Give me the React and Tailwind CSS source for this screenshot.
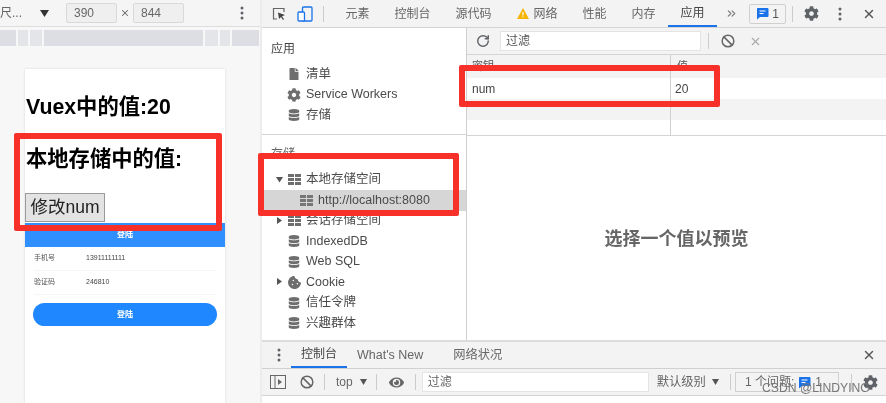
import React from 'react'
import { FaCog, FaDatabase, FaFile, FaCookieBite, FaEye } from 'react-icons/fa'
import { RotateCw, Ban, X, ChevronsRight } from 'lucide-react'

const MoreDots = ({ className }) => (
  <svg width="4" height="14" viewBox="0 0 4 14" className={className}>
    <circle cx="2" cy="2" r="1.5" fill="#5f6368" />
    <circle cx="2" cy="7" r="1.5" fill="#5f6368" />
    <circle cx="2" cy="12" r="1.5" fill="#5f6368" />
  </svg>
)

const GridIcon = ({ color = '#6e6e6e' }) => (
  <svg width="13" height="11" viewBox="0 0 13 11">
    <path d="M0 0h6v3H0zM7 0h6v3H7zM0 4h6v3H0zM7 4h6v3H7zM0 8h6v3H0zM7 8h6v3H7z" fill={color} />
  </svg>
)

const Caret = ({ dir }) => (
  <svg width="7" height="7" viewBox="0 0 7 7" className="shrink-0">
    {dir === 'down' ? <path d="M0 1h7L3.500 6.500z" fill="#555" /> : <path d="M1 0v7l5-3.500z" fill="#555" />}
  </svg>
)

const MessageIcon = () => (
  <svg width="13" height="13" viewBox="0 0 13 13">
    <path d="M1.500 1h10a1 1 0 0 1 1 1v7a1 1 0 0 1-1 1H4l-3 2.500V2a1 1 0 0 1 .5-1z" fill="#1a73e8" />
    <path d="M3.500 4h6M3.500 6.500h4" stroke="#fff" strokeWidth="1.200" />
  </svg>
)

const Tab = ({ children, active, pad = 'px-[12.5px] text-[12px]' }) => (
  <div className={`h-full flex items-center ${pad} ${active ? 'border-b-2 border-[#1a73e8] text-[#444]' : 'text-[#666]'}`}>
    {children}
  </div>
)

const TreeRow = ({ icon, caret, indent = 'pl-[25px]', children, selected }) => (
  <div className={`h-[20.5px] flex items-center relative text-[12.5px] text-[#4a4a4a] ${indent} ${selected ? 'bg-[#d6d6d6]' : ''}`}>
    {caret && <span className="absolute left-[14px] top-[6px] flex"><Caret dir={caret} /></span>}
    <span className="w-[14px] flex justify-center shrink-0">{icon}</span>
    <span className="ml-[5px] whitespace-nowrap">{children}</span>
  </div>
)

const DbIcon = () => <FaDatabase size={12} color="#6e6e6e" />

const RulerSegments = () => (
  <div className="mt-[3px] h-[16px] w-[259px] flex gap-[2px] bg-[#f7f7f7]">
    <div className="w-[16px] bg-[#dcdee3]" />
    <div className="w-[10px] bg-[#e3e5e9]" />
    <div className="w-[12px] bg-[#e3e5e9]" />
    <div className="flex-1 bg-[#dcdee3]" />
    <div className="w-[13px] bg-[#e3e5e9]" />
    <div className="w-[10px] bg-[#e3e5e9]" />
    <div className="w-[27px] bg-[#dcdee3]" />
  </div>
)

const DevicePanel = () => (
  <div className="w-[262px] shrink-0 flex flex-col bg-[#f7f7f7] border-r-2 border-[#ececec]">
    <div className="h-[27px] flex items-center bg-[#f5f5f5] border-b border-[#dedede] text-[12px] text-[#666]">
      <span className="w-[36px] whitespace-nowrap">尺...</span>
      <svg width="9" height="7" viewBox="0 0 9 7" className="ml-[4px]"><path d="M0 0h9L4.500 7z" fill="#333" /></svg>
      <div className="ml-[17px] w-[51px] h-[20px] pl-[7px] flex items-center bg-[#efefef] border border-[#d9d9d9] rounded-[2px]">390</div>
      <X size={10} color="#666" className="mx-[3px]" strokeWidth={2.500} />
      <div className="w-[51px] h-[20px] pl-[7px] flex items-center bg-[#efefef] border border-[#d9d9d9] rounded-[2px]">844</div>
      <MoreDots className="ml-[56px]" />
    </div>
    <RulerSegments />
    <div className="ml-[25px] mt-[23px] w-[200px] flex-1 bg-white shadow-[0_0_2px_#d5d5d5] overflow-hidden">
      <div className="h-[154px] pt-[24px] pl-[1px]">
        <h1 className="text-[21.3px] leading-[28px] font-bold text-black whitespace-nowrap">Vuex中的值:20</h1>
        <h1 className="mt-[24px] text-[21.3px] leading-[28px] font-bold text-black whitespace-nowrap">本地存储中的值:</h1>
        <button className="mt-[20px] -ml-[1px] w-[80px] h-[29px] text-[17.5px] leading-none text-[#222] bg-[#e3e3e3] border border-[#9a9a9a] whitespace-nowrap">修改num</button>
      </div>
      <div className="h-[24px] flex items-center justify-center bg-[#2f8fff] text-white text-[8px] font-bold">登陆</div>
      <div className="px-[9px] text-[7px] text-[#555]">
        <div className="h-[24px] flex items-center border-b border-[#f6f6f6]">
          <span className="w-[52px]">手机号</span><span className="text-[#444]">13911111111</span>
        </div>
        <div className="h-[24px] flex items-center border-b border-[#f6f6f6]">
          <span className="w-[52px]">验证码</span><span className="text-[#444]">246810</span>
        </div>
      </div>
      <div className="mx-[8px] mt-[8px] h-[23px] rounded-full bg-[#1f87ff] flex items-center justify-center text-white text-[8px] font-bold">登陆</div>
    </div>
  </div>
)

const Sidebar = () => (
  <div className="w-[205px] shrink-0 border-r border-[#cfcfcf] bg-white flex flex-col">
    <div className="h-[107px] border-b border-[#d4d4d4]">
      <div className="pl-[9px] pt-[12px] h-[36px] text-[12px] text-[#444]">应用</div>
      <TreeRow icon={<FaFile size={12} color="#6e6e6e" />}>清单</TreeRow>
      <TreeRow icon={<FaCog size={14} color="#6e6e6e" />}>Service Workers</TreeRow>
      <TreeRow icon={<DbIcon />}>存储</TreeRow>
    </div>
    <div className="pl-[9px] pt-[10px] h-[34.5px] text-[12px] text-[#666]">存储</div>
    <TreeRow caret="down" icon={<GridIcon />}>本地存储空间</TreeRow>
    <TreeRow indent="pl-[37px]" selected icon={<GridIcon color="#777" />}>http://localhost:8080</TreeRow>
    <TreeRow caret="right" icon={<GridIcon />}>会话存储空间</TreeRow>
    <TreeRow icon={<DbIcon />}>IndexedDB</TreeRow>
    <TreeRow icon={<DbIcon />}>Web SQL</TreeRow>
    <TreeRow caret="right" icon={<FaCookieBite size={13} color="#6e6e6e" />}>Cookie</TreeRow>
    <TreeRow icon={<DbIcon />}>信任令牌</TreeRow>
    <TreeRow icon={<DbIcon />}>兴趣群体</TreeRow>
  </div>
)

const StoragePane = () => (
  <div className="flex-1 min-w-0 flex flex-col bg-white">
    <div className="h-[27px] flex items-center bg-[#f3f3f3] border-b border-[#d4d4d4]">
      <RotateCw size={14} color="#5f6368" strokeWidth={2.500} className="ml-[9px]" />
      <div className="ml-[10px] w-[201px] h-[20px] pl-[5px] flex items-center bg-white border border-[#e4e4e4] text-[12px] text-[#555]">过滤</div>
      <div className="ml-[7px] w-px h-[16px] bg-[#ccc]" />
      <Ban size={14} color="#666" strokeWidth={2.500} className="ml-[12px]" />
      <X size={13} color="#aaa" className="ml-[14px]" />
    </div>
    <div className="h-[23px] flex bg-[#f3f3f3] text-[11px] text-[#555]">
      <div className="w-[204px] pl-[5px] pt-[3px] border-r border-[#d0d0d0]">密钥</div>
      <div className="pl-[6px] pt-[3px]">值</div>
    </div>
    <div className="h-[21px] flex bg-white text-[12px] text-[#444]">
      <div className="w-[204px] pl-[5px] flex items-center border-r border-[#d0d0d0]">num</div>
      <div className="pl-[4px] flex items-center">20</div>
    </div>
    <div className="h-[21px] flex bg-[#f3f3f3]"><div className="w-[204px] border-r border-[#d0d0d0]" /></div>
    <div className="h-[16px] flex border-b border-[#d4d4d4]"><div className="w-[204px] border-r border-[#d0d0d0]" /></div>
    <div className="flex-1 pt-[3px] flex items-center justify-center text-[18px] font-bold text-[#666]">选择一个值以预览</div>
  </div>
)

const DevTools = () => (
  <div className="flex-1 min-w-0 flex flex-col">
    <div className="h-[28px] flex items-center bg-[#f3f3f3] border-b border-[#d4d4d4]">
      <svg width="14" height="14" viewBox="0 0 14 14" fill="none" className="ml-[10px]">
        <path d="M5 12H1.500V1.500H12V5" stroke="#666" strokeWidth="1.200" />
        <path d="M6 5.500l7 2.500-3 1.200 2 3-1 .8-2-3-2 2z" fill="#444" />
      </svg>
      <svg width="16" height="16" viewBox="0 0 16 16" fill="none" className="ml-[11px]">
        <rect x="5.500" y="1" width="9.500" height="14" rx="1" stroke="#1a73e8" strokeWidth="1.300" />
        <rect x="1" y="6" width="6.500" height="9" rx="1" fill="#fff" stroke="#1a73e8" strokeWidth="1.300" />
      </svg>
      <div className="ml-[10px] w-px h-[16px] bg-[#ccc]" />
      <div className="ml-[9px] h-full flex items-center">
        <Tab>元素</Tab>
        <Tab>控制台</Tab>
        <Tab>源代码</Tab>
        <Tab>
          <svg width="12" height="11" viewBox="0 0 12 11" className="mr-[5px]">
            <path d="M6 0l6 11H0z" fill="#f4b400" />
            <path d="M6 4v3.500M6 8.500v1" stroke="#fff" strokeWidth="1.200" />
          </svg>
          网络
        </Tab>
        <Tab>性能</Tab>
        <Tab>内存</Tab>
        <Tab active>应用</Tab>
      </div>
      <ChevronsRight size={13} color="#777" className="ml-[8px]" />
      <div className="ml-[11px] w-[37px] h-[20px] flex items-center justify-center gap-[3px] border border-[#d0d0d0] rounded-[2px] text-[12px] text-[#555]">
        <MessageIcon />1
      </div>
      <div className="ml-[6px] w-px h-[16px] bg-[#ccc]" />
      <FaCog size={15} color="#5f6368" className="ml-[11px]" />
      <MoreDots className="ml-[19px]" />
      <X size={14} color="#555" strokeWidth={2.500} className="ml-[20px]" />
    </div>
    <div className="flex-1 min-h-0 flex border-b-2 border-[#dcdcdc]">
      <Sidebar />
      <StoragePane />
    </div>
    <div className="h-[27px] flex items-center bg-[#f3f3f3] border-b border-[#d0d0d0] text-[12px] text-[#666]">
      <MoreDots className="ml-[15px]" />
      <div className="ml-[10px] h-full flex items-center">
        <Tab active pad="px-[10px] text-[12px]">控制台</Tab>
        <Tab pad="px-[10px] text-[12.5px]">What's New</Tab>
        <Tab pad="ml-[20px] text-[12.25px]">网络状况</Tab>
      </div>
      <X size={14} color="#555" strokeWidth={2.500} className="ml-auto mr-[10px]" />
    </div>
    <div className="h-[27px] flex items-center bg-[#f3f3f3] border-b border-[#d4d4d4] text-[12px] text-[#666]">
      <svg width="16" height="14" viewBox="0 0 16 14" fill="none" className="ml-[8px]">
        <rect x="0.500" y="0.500" width="15" height="13" stroke="#666" />
        <path d="M5 1v12" stroke="#666" />
        <path d="M8 4v6l4-3z" fill="#666" />
      </svg>
      <Ban size={14} color="#666" strokeWidth={2.500} className="ml-[14px]" />
      <div className="ml-[10px] w-px h-[16px] bg-[#ccc]" />
      <span className="ml-[11px]">top</span>
      <svg width="7" height="6" viewBox="0 0 7 6" className="ml-[7px]"><path d="M0 0h7L3.500 6z" fill="#555" /></svg>
      <div className="ml-[9px] w-px h-[16px] bg-[#ccc]" />
      <FaEye size={15} color="#666" className="ml-[12px]" />
      <div className="ml-[11px] w-px h-[16px] bg-[#ccc]" />
      <div className="ml-[6px] w-[227px] h-[20px] pl-[5px] flex items-center bg-white border border-[#e4e4e4]">过滤</div>
      <span className="ml-[8px] whitespace-nowrap text-[12.3px]">默认级别</span>
      <svg width="7" height="6" viewBox="0 0 7 6" className="ml-[6px]"><path d="M0 0h7L3.500 6z" fill="#555" /></svg>
      <div className="ml-[11px] w-px h-[16px] bg-[#ccc]" />
      <div className="ml-[4px] w-[104px] h-[20px] pl-[9px] flex items-center gap-[4px] border border-[#d0d0d0] whitespace-nowrap">
        1 个问题: <MessageIcon /> 1
      </div>
      <div className="ml-[12px] w-px h-[16px] bg-[#ccc]" />
      <FaCog size={15} color="#5f6368" className="ml-[11px]" />
    </div>
    <div className="h-[7px] bg-white" />
  </div>
)

export default function App() {
  return (
    <div className="relative w-[886px] h-[403px] overflow-hidden flex bg-white blur-[0.3px] font-['Liberation_Sans','Noto_Sans_CJK_SC',sans-serif]">
      <DevicePanel />
      <DevTools />

      {/* red annotation boxes drawn on top of the screenshot */}
      <div className="absolute left-[14px] top-[133px] w-[208px] h-[98px] border-[6px] border-[#f8302a] rounded-[2px]" />
      <div className="absolute left-[258px] top-[153px] w-[201px] h-[63px] border-[6px] border-[#f8302a] rounded-[2px]" />
      <div className="absolute left-[459px] top-[65px] w-[261px] h-[42px] border-[6px] border-[#f8302a] rounded-[2px]" />

      <div className="absolute left-[762px] top-[380px] text-[12.2px] leading-[16px] text-[#777] whitespace-nowrap">CSDN @LINDYING</div>
    </div>
  )
}
